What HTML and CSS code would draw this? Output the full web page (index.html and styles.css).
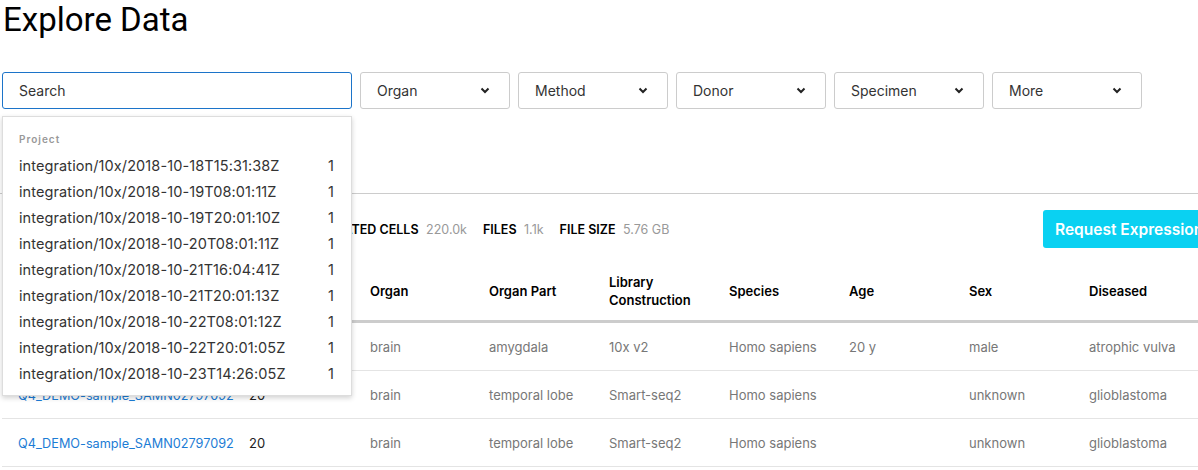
FILE: index.html
```html
<!DOCTYPE html>
<html lang="en">
<head>
    <meta charset="UTF-8">
    <title>Explore Data</title>
    <meta name="viewport" content="width=device-width, initial-scale=1.0">
    <link rel="stylesheet" href="styles.css">
</head>
<body>

<div class="page">
    <h1 class="title">Explore Data</h1>

    <div class="filters">
        <div class="search-wrap">
            <input class="search" type="text" placeholder="Search">

            <!-- Search suggestions -->
            <div class="suggest">
                <div class="suggest-label">Project</div>
                <ul class="suggest-list">
                    <li><span>integration/10x/2018-10-18T15:31:38Z</span><span>1</span></li>
                    <li><span>integration/10x/2018-10-19T08:01:11Z</span><span>1</span></li>
                    <li><span>integration/10x/2018-10-19T20:01:10Z</span><span>1</span></li>
                    <li><span>integration/10x/2018-10-20T08:01:11Z</span><span>1</span></li>
                    <li><span>integration/10x/2018-10-21T16:04:41Z</span><span>1</span></li>
                    <li><span>integration/10x/2018-10-21T20:01:13Z</span><span>1</span></li>
                    <li><span>integration/10x/2018-10-22T08:01:12Z</span><span>1</span></li>
                    <li><span>integration/10x/2018-10-22T20:01:05Z</span><span>1</span></li>
                    <li><span>integration/10x/2018-10-23T14:26:05Z</span><span>1</span></li>
                </ul>
            </div>
        </div>

        <div class="select">Organ
            <svg width="10" height="7" viewBox="0 0 10 7"><path d="M1.5 1.5 L5 5 L8.5 1.5" fill="none" stroke="#222" stroke-width="2"/></svg>
        </div>
        <div class="select">Method
            <svg width="10" height="7" viewBox="0 0 10 7"><path d="M1.5 1.5 L5 5 L8.5 1.5" fill="none" stroke="#222" stroke-width="2"/></svg>
        </div>
        <div class="select">Donor
            <svg width="10" height="7" viewBox="0 0 10 7"><path d="M1.5 1.5 L5 5 L8.5 1.5" fill="none" stroke="#222" stroke-width="2"/></svg>
        </div>
        <div class="select">Specimen
            <svg width="10" height="7" viewBox="0 0 10 7"><path d="M1.5 1.5 L5 5 L8.5 1.5" fill="none" stroke="#222" stroke-width="2"/></svg>
        </div>
        <div class="select">More
            <svg width="10" height="7" viewBox="0 0 10 7"><path d="M1.5 1.5 L5 5 L8.5 1.5" fill="none" stroke="#222" stroke-width="2"/></svg>
        </div>
    </div>

    <div class="selected-terms"></div>

    <div class="summary">
        <div class="stats">
            <span class="stat"><b>Specimens</b> 3</span>
            <span class="stat"><b>Donors</b> 2</span>
            <span class="stat"><b>Estimated Cells</b> 220.0k</span>
            <span class="stat"><b>Files</b> 1.1k</span>
            <span class="stat"><b>File Size</b> 5.76 GB</span>
        </div>
        <button class="request-btn">Request Expression Matrix</button>
    </div>

    <table class="results">
        <colgroup>
            <col style="width:231px">
            <col style="width:121px">
            <col style="width:119px">
            <col style="width:120px">
            <col style="width:120px">
            <col style="width:120px">
            <col style="width:120px">
            <col style="width:120px">
            <col style="width:125px">
        </colgroup>
        <thead>
            <tr>
                <th>Specimen Id</th>
                <th>Cell Count</th>
                <th>Organ</th>
                <th>Organ Part</th>
                <th>Library Construction</th>
                <th>Species</th>
                <th>Age</th>
                <th>Sex</th>
                <th>Diseased</th>
            </tr>
        </thead>
        <tbody>
            <tr>
                <td><a href="#">Q4_DEMO-sample_SAMN02797092</a></td>
                <td class="count">20</td>
                <td>brain</td>
                <td>amygdala</td>
                <td>10x v2</td>
                <td>Homo sapiens</td>
                <td>20 y</td>
                <td>male</td>
                <td>atrophic vulva</td>
            </tr>
            <tr>
                <td><a href="#">Q4_DEMO-sample_SAMN02797092</a></td>
                <td class="count">20</td>
                <td>brain</td>
                <td>temporal lobe</td>
                <td>Smart-seq2</td>
                <td>Homo sapiens</td>
                <td></td>
                <td>unknown</td>
                <td>glioblastoma</td>
            </tr>
            <tr>
                <td><a href="#">Q4_DEMO-sample_SAMN02797092</a></td>
                <td class="count">20</td>
                <td>brain</td>
                <td>temporal lobe</td>
                <td>Smart-seq2</td>
                <td>Homo sapiens</td>
                <td></td>
                <td>unknown</td>
                <td>glioblastoma</td>
            </tr>
        </tbody>
    </table>
</div>

</body>
</html>
```

FILE: styles.css
```css
body {
    margin: 0;
    background: #fff;
    font-family: Inter, sans-serif;
    color: #222;
    overflow: hidden;
}
.page {
    padding-left: 2px;
    width: 1300px;
}
.title {
    margin: 0;
    font-family: Roboto, sans-serif;
    font-weight: 400;
    font-size: 33px;
    line-height: 40px;
    color: #000;
    padding-left: 1px;
}
.filters {
    display: flex;
    gap: 8px;
    margin-top: 32px;
}
.search-wrap {
    position: relative;
}
.search {
    box-sizing: border-box;
    width: 350px;
    height: 37px;
    padding: 0 16px;
    border: 1px solid #1c74c9;
    border-radius: 3px;
    font-family: inherit;
    font-size: 14px;
    color: #333;
    outline: none;
}
.search::placeholder {
    color: #333;
}
.select {
    box-sizing: border-box;
    width: 150px;
    height: 37px;
    padding: 0 19px 0 16px;
    border: 1px solid #ccc;
    border-radius: 3px;
    display: flex;
    align-items: center;
    justify-content: space-between;
    font-size: 14px;
    color: #333;
}
.suggest {
    position: absolute;
    top: 44px;
    left: 0;
    width: 350px;
    box-sizing: border-box;
    padding: 14px 17px 8px 16px;
    background: #fff;
    border: 1px solid #ddd;
    box-shadow: 0 2px 5px rgba(0, 0, 0, 0.18);
    z-index: 2;
}
.suggest-label {
    font-size: 10px;
    font-weight: 600;
    letter-spacing: 1px;
    color: #999;
    line-height: 16px;
    margin-bottom: 6px;
}
.suggest-list {
    list-style: none;
    margin: 0;
    padding: 0;
}
.suggest-list li {
    display: flex;
    justify-content: space-between;
    line-height: 26px;
    font-size: 14.5px;
    letter-spacing: 0.1px;
    color: #333;
}
.selected-terms {
    height: 84px;
    border-bottom: 1px solid #ccc;
    margin-left: -2px;
}
.summary {
    display: flex;
    align-items: center;
    padding: 16px 0 14px 0;
}
.stats {
    flex: 0 0 1041px;
    box-sizing: border-box;
    display: flex;
    gap: 16px;
    padding-left: 113px;
    font-size: 12.5px;
    color: #999;
}
.stat b {
    color: #000;
    font-weight: 600;
    text-transform: uppercase;
    margin-right: 4px;
}
.request-btn {
    height: 38px;
    padding: 0 12px;
    border: none;
    border-radius: 3px;
    background: #0ad1f2;
    color: #fff;
    font-family: inherit;
    font-weight: 600;
    font-size: 15.5px;
    white-space: nowrap;
}
.results {
    width: 1196px;
    border-collapse: collapse;
    table-layout: fixed;
    font-size: 13px;
}
.results th {
    text-align: left;
    font-weight: 600;
    color: #000;
    padding: 11px 16px;
    line-height: 18px;
    height: 36px;
    border-bottom: 3px solid #ccc;
}
.results td {
    padding: 0 16px;
    height: 47px;
    color: #777;
    border-bottom: 1px solid #e4e4e4;
    white-space: nowrap;
}
.results td.count {
    color: #222;
}
.results a {
    font-size: 12.7px;
    color: #1c7cd5;
    text-decoration: none;
}
```
